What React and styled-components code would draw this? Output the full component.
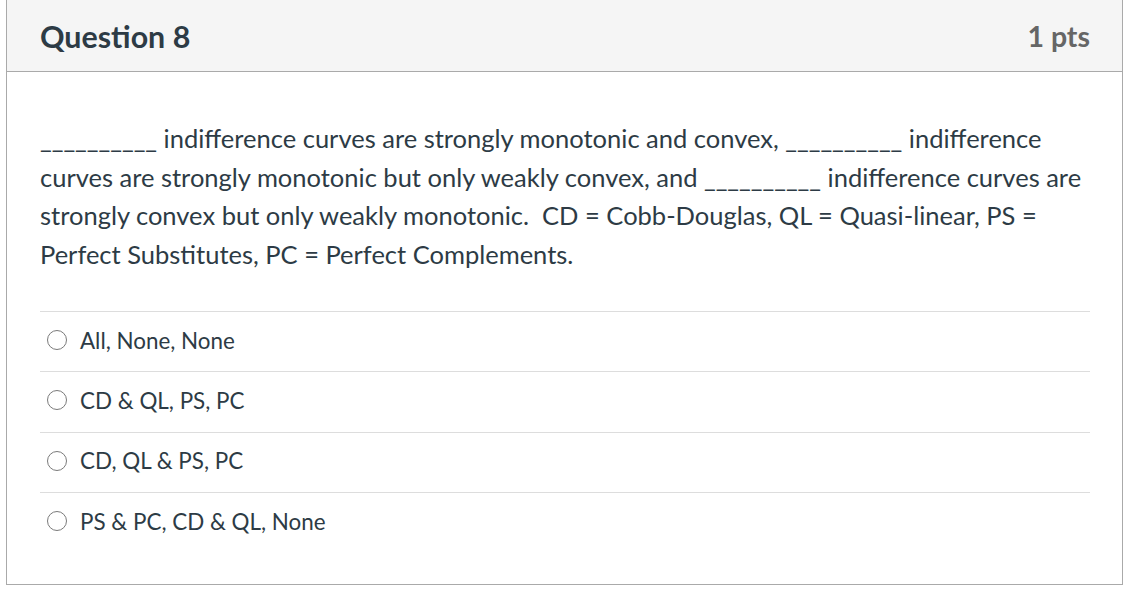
import React from "react";
import styled, { createGlobalStyle } from "styled-components";

const GlobalStyle = createGlobalStyle`
  html, body {
    margin: 0;
    padding: 0;
    background: #ffffff;
    font-family: Lato, "Open Sans", sans-serif;
    color: #2d3b45;
  }
`;

const Page = styled.div`
  padding: 0 0 0 6px;
  width: 1144px;
  height: 604px;
  box-sizing: border-box;
`;

const Card = styled.div`
  width: 1117px;
  box-sizing: border-box;
  border: 1px solid #aaaaaa;
  border-top: none;
  height: 585px;
`;

const Header = styled.div`
  height: 72px;
  box-sizing: border-box;
  background: #f5f5f5;
  border-bottom: 1px solid #aaaaaa;
  display: flex;
  align-items: center;
  justify-content: space-between;
  padding: 0 32px 0 33px;
`;

const Title = styled.h2`
  margin: 0;
  font-size: 30.4px;
  font-weight: 700;
  color: #2d3b45;
`;

const Points = styled.span`
  font-size: 28.5px;
  font-weight: 700;
  color: #666666;
`;

const Body = styled.div`
  padding: 47px 32px 0 33px;
`;

const Prompt = styled.p`
  margin: 0 0 38px;
  font-size: 25.5px;
  line-height: 38.5px;
`;

const Answer = styled.label`
  display: flex;
  align-items: center;
  height: 60.3px;
  border-top: 1px solid #dddddd;
  box-sizing: border-box;
  font-size: 22.4px;
  padding-left: 7px;
  padding-bottom: 3px;
  gap: 13px;
`;

const Radio = styled.span`
  width: 20px;
  height: 20px;
  box-sizing: border-box;
  border: 1.5px solid #7a7a7a;
  border-radius: 50%;
  background: #fff;
  flex-shrink: 0;
`;

const answers = [
  "All, None, None",
  "CD & QL, PS, PC",
  "CD, QL & PS, PC",
  "PS & PC, CD & QL, None",
];

export default function App() {
  return (
    <Page>
      <GlobalStyle />
      <Card>
        <Header>
          <Title>Question 8</Title>
          <Points>1 pts</Points>
        </Header>
        <Body>
          <Prompt>
            __________ indifference curves are strongly monotonic and convex,
            __________ indifference curves are strongly monotonic but only
            weakly convex, and __________ indifference curves are strongly
            convex but only weakly monotonic.&nbsp; CD = Cobb-Douglas, QL =
            Quasi-linear, PS = Perfect Substitutes, PC = Perfect Complements.
          </Prompt>
          {answers.map((a) => (
            <Answer key={a}>
              <Radio />
              {a}
            </Answer>
          ))}
        </Body>
      </Card>
    </Page>
  );
}
